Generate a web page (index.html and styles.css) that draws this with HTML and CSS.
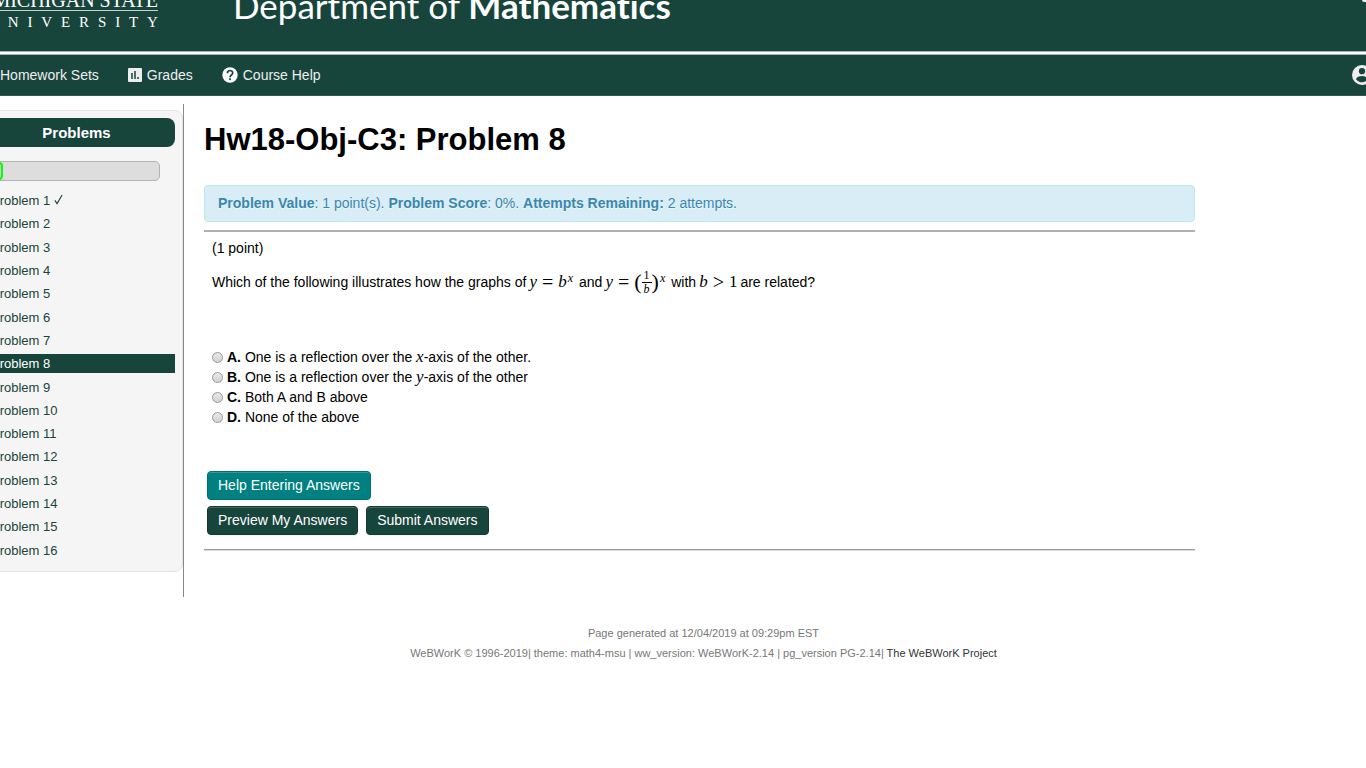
FILE: index.html
```html
<!DOCTYPE html>
<html lang="en">
<head>
<meta charset="UTF-8">
<meta name="viewport" content="width=device-width, initial-scale=1.0">
<title>Hw18-Obj-C3: Problem 8</title>
<link rel="stylesheet" href="styles.css">
</head>
<body>

<header class="masthead">
    <div class="logo">
        <div class="logo-name">MICHIGAN STATE</div>
        <div class="logo-univ"><span>U</span><span>N</span><span>I</span><span>V</span><span>E</span><span>R</span><span>S</span><span>I</span><span>T</span><span>Y</span></div>
    </div>
    <div class="department">Department of <b>Mathematics</b></div>
    <div class="corner"></div>
</header>

<nav class="navbar">
    <a href="#">Homework Sets</a>
    <a href="#">
        <svg class="icon-grades" viewBox="0 0 14 14"><rect width="14" height="14" rx="1" fill="#eee"/><path d="M4 5v6M7 3v8M10 9v2" stroke="#18453b" stroke-width="1.5"/></svg>
        Grades
    </a>
    <a href="#">
        <svg class="icon-help" viewBox="0 0 16 16"><circle cx="8" cy="8" r="7.7" fill="#fff"/><path d="M5.4 6.2C5.4 2.6 10.7 2.7 10.7 6C10.7 8 8 8 8 10.2" fill="none" stroke="#18453b" stroke-width="1.7"/><rect x="7.1" y="11.3" width="1.8" height="1.8" fill="#18453b"/></svg>
        Course Help
    </a>
    <a href="#" class="user" aria-label="User">
        <svg class="icon-user" viewBox="0 0 20 20"><circle cx="10" cy="10" r="10" fill="#eee"/><circle cx="10" cy="6.2" r="3.1" fill="#18453b"/><path d="M4 14.2C5 10 15 10 16 14.2C13 18.3 7 18.3 4 14.2Z" fill="#18453b"/></svg>
    </a>
</nav>

<div class="page">
    <aside class="sidebar">
        <div class="problems">
            <h2>Problems</h2>
            <div class="progress"><div class="progress-done"></div></div>
            <ul>
                <li><a href="#">Problem 1 <svg class="check" viewBox="0 0 10 12"><path d="M1 7l2.4 3.6L9 1" fill="none" stroke="#18453b" stroke-width="1.2"/></svg></a></li>
                <li><a href="#">Problem 2</a></li>
                <li><a href="#">Problem 3</a></li>
                <li><a href="#">Problem 4</a></li>
                <li><a href="#">Problem 5</a></li>
                <li><a href="#">Problem 6</a></li>
                <li><a href="#">Problem 7</a></li>
                <li><a href="#" class="active">Problem 8</a></li>
                <li><a href="#">Problem 9</a></li>
                <li><a href="#">Problem 10</a></li>
                <li><a href="#">Problem 11</a></li>
                <li><a href="#">Problem 12</a></li>
                <li><a href="#">Problem 13</a></li>
                <li><a href="#">Problem 14</a></li>
                <li><a href="#">Problem 15</a></li>
                <li><a href="#">Problem 16</a></li>
            </ul>
        </div>
    </aside>

    <main class="content">
        <h1>Hw18-Obj-C3: Problem 8</h1>
        <div class="alert"><b>Problem Value</b>: 1 point(s). <b>Problem Score</b>: 0%. <b>Attempts Remaining:</b> 2 attempts.</div>
        <hr>
        <form class="problem">
            <p>(1 point)</p>
            <p class="question">
                <span>Which of the following illustrates how the graphs of</span>
                <span class="math"><i>y</i><span class="rel">=</span><i>b</i><sup>x</sup></span>
                <span>and</span>
                <span class="math"><i>y</i><span class="rel">=</span><span class="paren">(</span><span class="frac"><span>1</span><i>b</i></span><span class="paren">)</span><sup>x</sup></span>
                <span>with</span>
                <span class="math"><i>b</i><span class="rel">&gt;</span>1</span>
                <span>are related?</span>
            </p>
            <div class="answers">
                <label><input type="radio" name="answer"><span><b>A.</b> One is a reflection over the <i class="var">x</i>-axis of the other.</span></label>
                <label><input type="radio" name="answer"><span><b>B.</b> One is a reflection over the <i class="var">y</i>-axis of the other</span></label>
                <label><input type="radio" name="answer"><span><b>C.</b> Both A and B above</span></label>
                <label><input type="radio" name="answer"><span><b>D.</b> None of the above</span></label>
            </div>
            <div class="buttons">
                <button type="button" class="btn help">Help Entering Answers</button>
            </div>
            <div class="buttons">
                <button type="button" class="btn">Preview My Answers</button>
                <button type="button" class="btn">Submit Answers</button>
            </div>
        </form>
        <hr class="thin">
    </main>
</div>

<footer class="footer">
    <div>Page generated at 12/04/2019 at 09:29pm EST</div>
    <div>WeBWorK © 1996-2019| theme: math4-msu | ww_version: WeBWorK-2.14 | pg_version PG-2.14| <a href="#">The WeBWorK Project</a></div>
</footer>

</body>
</html>
```
FILE: styles.css
```css
* {
    box-sizing: border-box;
}
body {
    margin: 0;
    font-family: "Liberation Sans", Arial, sans-serif;
    font-size: 14px;
    line-height: 20px;
    color: #000;
    background-color: #fff;
    overflow-x: hidden;
}
a {
    text-decoration: none;
}
.masthead {
    display: flex;
    align-items: flex-end;
    height: 54px;
    background-color: #18453b;
    border-bottom: 2px solid #fff;
    box-shadow: inset 0 -1px 0 #a3b5b1;
    color: #fff;
    overflow: hidden;
}
.logo {
    width: 170px;
    margin-left: -12px;
    margin-right: 75px;
    padding-bottom: 23px;
    font-family: "Liberation Serif", serif;
}
.logo-name {
    display: flex;
    justify-content: flex-end;
    border-bottom: 1px solid #c5d0cd;
    font-size: 20px;
    line-height: 20px;
    white-space: nowrap;
}
.logo-univ {
    display: flex;
    justify-content: space-between;
    margin-top: 4px;
    font-size: 15px;
    line-height: 14px;
}
.department {
    font-family: Lato, "Open Sans", sans-serif;
    font-size: 35px;
    font-variant-ligatures: none;
    line-height: 40px;
    padding-bottom: 27px;
}
.corner {
    align-self: flex-start;
    width: 4px;
    height: 2px;
    margin-left: auto;
    background-color: #eee;
    border-bottom-left-radius: 2px;
}
.navbar {
    display: flex;
    align-items: center;
    gap: 29px;
    height: 42px;
    background-color: #18453b;
    border-top: 1px solid #a3b5b1;
    border-bottom: 1px solid #2f584f;
}
.navbar a {
    display: flex;
    align-items: center;
    gap: 5px;
    color: #eee;
}
.icon-grades {
    width: 14px;
    height: 14px;
}
.icon-help {
    width: 16px;
    height: 16px;
}
.icon-user {
    width: 20px;
    height: 20px;
}
.navbar .user {
    margin-left: auto;
    margin-right: -6px;
}
.page {
    display: flex;
    padding-top: 8px;
}
.sidebar {
    width: 214px;
    margin-left: -30px;
    padding: 6px 0 25px;
    border-right: 1px solid #888;
    flex-shrink: 0;
}
.problems {
    padding: 7px;
    background-color: #f5f5f5;
    border: 1px solid #e3e3e3;
    border-radius: 8px;
}
.problems h2 {
    margin: 0 0 14px;
    padding: 4px 0;
    background-color: #18453b;
    border-radius: 8px;
    color: #fff;
    font-size: 15px;
    line-height: 21px;
    text-align: center;
}
.progress {
    height: 20px;
    margin-right: 15px;
    background-color: #ddd;
    border: 1px solid #b3b3b3;
    border-radius: 5px;
}
.progress-done {
    width: 24px;
    height: 18px;
    border: 2px solid #0f0;
    border-radius: 4px;
}
.problems ul {
    display: grid;
    grid-auto-rows: 1fr;
    height: 373px;
    margin: 10px 0 0;
    padding: 0;
    list-style: none;
}
.problems li a {
    display: block;
    padding-left: 13px;
    font-size: 13px;
    line-height: 19px;
    color: #18453b;
}
.problems li .active {
    background-color: #18453b;
    color: #fff;
}
.check {
    width: 9px;
    height: 11px;
}
.content {
    flex: 1;
    max-width: 991px;
    margin-left: 20px;
}
h1 {
    margin: 15px 0 24px;
    font-size: 31px;
    line-height: 42px;
}
.alert {
    padding: 8px 13px;
    background-color: #d9edf7;
    border: 1px solid #bce8f1;
    border-radius: 4px;
    color: #3a87ad;
    line-height: 19px;
    text-shadow: 0 1px 0 rgba(255, 255, 255, 0.5);
}
hr {
    height: 2px;
    margin: 8px 0 6px;
    border: 0;
    background-color: #b0b0b0;
}
hr.thin {
    margin-top: 14px;
    border-top: 1px solid #999;
    background-color: #ddd;
}
.problem {
    padding: 0 8px;
}
.problem p {
    margin: 0;
}
.problem .question {
    display: flex;
    align-items: center;
    gap: 3px;
    height: 40px;
    margin-top: 4px;
}
.math {
    display: flex;
    align-items: center;
    font-family: "Liberation Serif", serif;
    font-size: 17px;
}
.math sup {
    margin: 0 3px 8px 1px;
    font-size: 12px;
    line-height: 12px;
    font-style: italic;
    vertical-align: baseline;
}
.rel {
    margin: 0 5px;
    font-size: 20px;
}
.paren {
    font-size: 22px;
}
.frac {
    display: flex;
    flex-direction: column;
    align-items: center;
    font-size: 12px;
    line-height: 13px;
}
.frac span {
    padding: 0 2px;
    border-bottom: 1px solid #000;
}
.var {
    font-family: "Liberation Serif", serif;
    font-size: 17px;
    line-height: 16px;
}
.answers {
    display: flex;
    flex-direction: column;
    margin: 45px 0 44px;
}
.answers label {
    display: flex;
    align-items: center;
    gap: 4px;
    height: 20px;
}
.answers input {
    appearance: none;
    width: 11px;
    height: 11px;
    margin: 0;
    border: 1px solid #999;
    border-radius: 50%;
    background-image: linear-gradient(#e8e8e8, #d2d2d2);
}
.buttons {
    display: flex;
    gap: 8px;
    margin: 0 0 6px -5px;
}
.btn {
    padding: 4px 10px;
    background-color: #18453b;
    border: 1px solid #143a31;
    border-radius: 4px;
    box-shadow: inset 0 1px 0 rgba(255, 255, 255, 0.2), 0 1px 2px rgba(0, 0, 0, 0.05);
    color: #fff;
    font-family: inherit;
    font-size: 14px;
    line-height: 19px;
}
.btn.help {
    background-color: #008080;
    border-color: #007070;
}
.footer {
    margin-top: 26px;
    padding-left: 41px;
    font-size: 11px;
    color: #777;
    text-align: center;
}
.footer a {
    color: #333;
}
```
